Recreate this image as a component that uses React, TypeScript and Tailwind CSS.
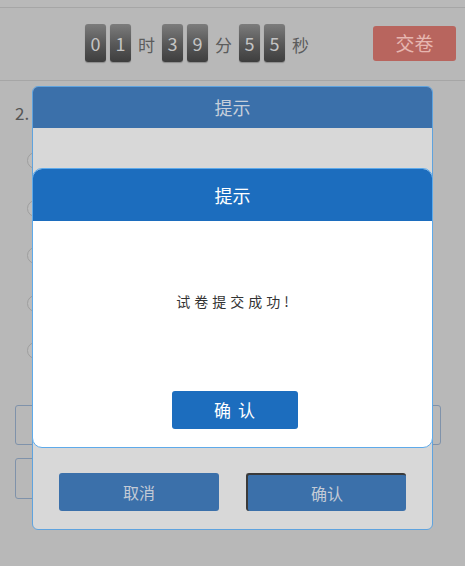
import React from "react";

const font = { fontFamily: '"Noto Sans CJK SC", "Noto Sans", sans-serif' };

function Digit({ d }: { d: string }) {
  return (
    <div className="w-[21px] h-[38px] rounded-[3px] bg-gradient-to-b from-[#7c7c7c] via-[#5a5a5a] to-[#3e3e3e] flex items-center justify-center text-[18px] text-[#c4c4c4] leading-none shadow-[0_1px_1px_rgba(0,0,0,0.25)]">
      {d}
    </div>
  );
}

function Label({ t }: { t: string }) {
  return <span className="text-[17px] text-[#5c5c5c] mx-[7px] leading-none">{t}</span>;
}

function Radio() {
  return <div className="w-[17px] h-[17px] rounded-full border border-[#9e9e9e] bg-[#bcbcbc]" />;
}

export default function App() {
  return (
    <div className="relative w-[465px] h-[566px] overflow-hidden bg-[#b8b8b8]" style={font}>
      {/* underlying page */}
      <div className="h-[8px] border-b border-[#a6a6a6] bg-[#b9b9b9]" />
      <div className="h-[73px] border-b border-[#a6a6a6] flex items-center pl-[85px] pr-[9px]">
        <div className="flex items-center gap-[4px] -mt-[3px]">
          <Digit d="0" />
          <Digit d="1" />
        </div>
        <Label t="时" />
        <div className="flex items-center gap-[4px] -mt-[3px]">
          <Digit d="3" />
          <Digit d="9" />
        </div>
        <Label t="分" />
        <div className="flex items-center gap-[4px] -mt-[3px]">
          <Digit d="5" />
          <Digit d="5" />
        </div>
        <Label t="秒" />
        <div className="ml-auto w-[83px] h-[35px] rounded-[3px] bg-[#b8655e] flex items-center justify-center text-[19px] text-[#e6b6b0] -mt-[1px]">
          交卷
        </div>
      </div>
      <div className="px-[15px] pt-[22px]">
        <div className="text-[17px] text-[#555] leading-[20px]">2.</div>
        <div className="flex flex-col gap-[30.5px] pl-[12px] mt-[29px]">
          <Radio />
          <Radio />
          <Radio />
          <Radio />
          <Radio />
        </div>
        <div className="mt-[46px] h-[40px] w-[426px] rounded-[3px] border border-[#7f92aa]" />
        <div className="mt-[13px] h-[41px] w-[400px] rounded-[3px] border border-[#7f92aa]" />
      </div>

      {/* outer dialog */}
      <div className="absolute left-[32px] top-[86px] w-[401px] h-[444px] rounded-[6px] border border-[#5fa3de] bg-[#d8d8d8] overflow-hidden flex flex-col">
        <div className="h-[41px] bg-[#3b70aa] flex items-center justify-center text-[18px] text-[#c6cfdb]">
          提示
        </div>
        <div className="flex-1" />
        <div className="flex justify-between px-[26px] pb-[18px]">
          <div className="w-[160px] h-[38px] rounded-[3px] bg-[#3b70aa] flex items-center justify-center text-[16px] text-[#c3cbd6]">
            取消
          </div>
          <div className="w-[160px] h-[38px] rounded-[3px] bg-[#3b70aa] border-t-[2px] border-l-[2px] border-[#3a3a3a] flex items-center justify-center text-[16px] text-[#c3cbd6]">
            确认
          </div>
        </div>
      </div>

      {/* inner dialog */}
      <div className="absolute left-[32px] top-[168px] w-[401px] h-[280px] rounded-[10px] border border-[#5eaaea] bg-white overflow-hidden flex flex-col">
        <div className="h-[52px] bg-[#1c6dbe] flex items-center justify-center text-[18px] text-white">
          提示
        </div>
        <div className="flex-1 flex flex-col items-center">
          <div className="mt-[70px] text-[14px] text-[#333] tracking-[4px] pl-[4px] leading-[20px]">
            试卷提交成功!
          </div>
          <div className="mt-[80px] ml-[4px] w-[126px] h-[38px] rounded-[3px] bg-[#1c6dbe] flex items-center justify-center text-[17px] text-white tracking-[7px] pl-[7px]">
            确认
          </div>
        </div>
      </div>
    </div>
  );
}
